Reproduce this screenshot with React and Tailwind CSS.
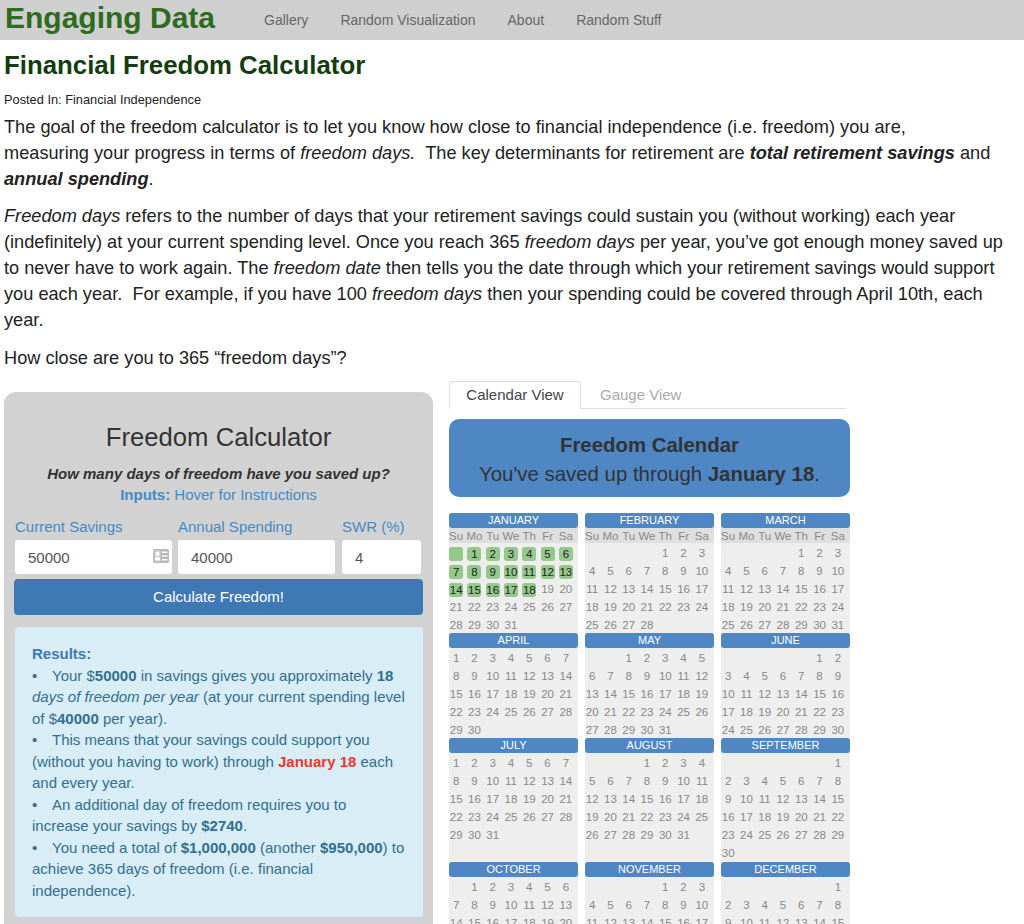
const months = [
  { name: 'JANUARY', start: 1, days: 31 },
  { name: 'FEBRUARY', start: 4, days: 28 },
  { name: 'MARCH', start: 4, days: 31 },
  { name: 'APRIL', start: 0, days: 30 },
  { name: 'MAY', start: 2, days: 31 },
  { name: 'JUNE', start: 5, days: 30 },
  { name: 'JULY', start: 0, days: 31 },
  { name: 'AUGUST', start: 3, days: 31 },
  { name: 'SEPTEMBER', start: 6, days: 30 },
  { name: 'OCTOBER', start: 1, days: 31 },
  { name: 'NOVEMBER', start: 4, days: 30 },
  { name: 'DECEMBER', start: 6, days: 31 },
];

const dayNames = ['Su', 'Mo', 'Tu', 'We', 'Th', 'Fr', 'Sa'];
const savedDays = 18;

const Month = ({ month, index }) => {
  const cells = [];
  for (let i = 0; i < month.start; i++) cells.push(null);
  for (let d = 1; d <= month.days; d++) cells.push(d);
  const showNames = index < 3;

  return (
    <div className="bg-[#eeeeee]">
      <div className="h-[15px] bg-[#4f87c4] rounded-[3px] text-white text-[11px] leading-[14px] text-center">
        {month.name}
      </div>
      {showNames ? (
        <div className="h-[15px] bg-[#dfdfdf]">
          <div className="grid grid-cols-7 -ml-[2px] w-[128px] text-[#888888] text-[11.5px] leading-[16px] text-center">
            {dayNames.map((n) => (
              <div key={n}>{n}</div>
            ))}
          </div>
        </div>
      ) : null}
      <div className={`grid grid-cols-7 -ml-[2px] w-[128px] pt-[2px] ${index < 6 ? '-mb-[2px]' : '-mb-px'}`}>
        {cells.map((d, i) => {
          const saved = index === 0 && i <= savedDays;
          return (
            <div key={i} className="h-[18px] flex items-center justify-center text-[11.5px]">
              {saved ? (
                <span className="w-[14px] h-[14px] rounded-[3px] bg-[#94c98b] text-[#222222] leading-[14px] text-center">
                  {d}
                </span>
              ) : (
                <span className="text-[#888888]">{d}</span>
              )}
            </div>
          );
        })}
      </div>
    </div>
  );
};

const CardIcon = () => (
  <svg className="absolute right-[3px] top-[9px]" width="16" height="14" viewBox="0 0 17 15">
    <rect x="0" y="0" width="17" height="15" rx="2" fill="#b5b5b5" />
    <rect x="1.5" y="1.5" width="6.5" height="12" fill="#d6d6d6" />
    <circle cx="4.8" cy="5" r="2" fill="#ffffff" />
    <path d="M2 12c0-2.5 1.2-3.5 2.8-3.5s2.8 1 2.8 3.5z" fill="#ffffff" />
    <path d="M9.5 3.5h6M9.5 7.5h6M9.5 11.5h6" stroke="#ffffff" strokeWidth="1.5" />
  </svg>
);

const Bullet = () => <span className="inline-block w-[20px]">•</span>;

const App = () => {
  return (
    <div className="h-screen overflow-hidden bg-white font-['Liberation_Sans',Arial,sans-serif] text-[#222222]">
      <nav className="h-10 bg-[#cfcfcf] flex items-center pl-[5px]">
        <a className="text-[30px] font-bold text-[#2e6b1f] leading-none -mt-1">Engaging Data</a>
        <div className="flex gap-8 ml-[49px] text-[14px] text-[#666666]">
          <a>Gallery</a>
          <a>Random Visualization</a>
          <a>About</a>
          <a>Random Stuff</a>
        </div>
      </nav>

      <main className="px-1">
        <h1 className="mt-[10px] text-[25.8px] leading-[30px] font-bold text-[#143d0f]">Financial Freedom Calculator</h1>
        <p className="mt-[12px] text-[12.8px] leading-[16px]">Posted In: Financial Independence</p>
        <p className="mt-[6px] text-[18.2px] leading-[26px]">
          The goal of the freedom calculator is to let you know how close to financial independence (i.e. freedom) you are,
          <br />
          measuring your progress in terms of <em>freedom days.</em>&nbsp; The key determinants for retirement are{' '}
          <strong>
            <em>total retirement savings</em>
          </strong>{' '}
          and{' '}
          <strong>
            <em>annual spending</em>
          </strong>
          .
        </p>
        <p className="mt-[11px] text-[18.2px] leading-[26px] w-[1016px]">
          <em>Freedom days</em> refers to the number of days that your retirement savings could sustain you (without working) each year
          (indefinitely) at your current spending level. Once you reach 365 <em>freedom days</em> per year, you’ve got enough money saved up
          to never have to work again. The <em>freedom date</em> then tells you the date through which your retirement savings would support
          you each year.&nbsp; For example, if you have 100 <em>freedom days</em> then your spending could be covered through April 10th, each
          year.
        </p>
        <p className="mt-[12px] text-[18.2px] leading-[26px]">How close are you to 365 “freedom days”?</p>

        <div className="flex mt-[10px] gap-4">
          <section className="mt-[11px] w-[429px] shrink-0 bg-[#d2d2d2] rounded-xl px-[10px] pb-6">
            <h2 className="pt-[30px] text-[25.7px] leading-[30px] text-center text-[#333333]">Freedom Calculator</h2>
            <p className="mt-[11px] text-[15px] leading-[21px] font-bold italic text-center text-[#333333]">
              How many days of freedom have you saved up?
            </p>
            <p className="text-[15px] leading-[21px] text-center text-[#428bca]">
              <strong>Inputs:</strong> Hover for Instructions
            </p>

            <div className="flex gap-[6px] mt-[12px] text-[15px] text-[#428bca]">
              <label className="w-[157px] ml-px">
                <span className="block leading-[20px] mb-[3px]">Current Savings</span>
                <span className="relative block">
                  <input defaultValue="50000" className="w-full h-[34px] bg-white rounded-[3px] px-[13px] text-[15px] text-[#555555]" />
                  <CardIcon />
                </span>
              </label>
              <label className="w-[157px]">
                <span className="block leading-[20px] mb-[3px]">Annual Spending</span>
                <input defaultValue="40000" className="w-full h-[34px] bg-white rounded-[3px] px-[13px] text-[15px] text-[#555555]" />
              </label>
              <label className="w-[79px] ml-px">
                <span className="block leading-[20px] mb-[3px]">SWR (%)</span>
                <input defaultValue="4" className="w-full h-[34px] bg-white rounded-[3px] px-[13px] text-[15px] text-[#555555]" />
              </label>
            </div>

            <button className="block w-full h-[36px] mt-[5px] bg-[#3f79b5] rounded-[4px] text-white text-[15px]">Calculate Freedom!</button>

            <div className="mt-[12px] ml-px bg-[#d9edf7] rounded-[4px] pl-[17px] pr-[16px] py-[16px] text-[15px] leading-[21.5px] text-[#31708f]">
              <strong className="text-[#3f79b5]">Results:</strong>
              <br />
              <Bullet />
              Your $<strong>50000</strong> in savings gives you approximately <strong>18</strong> <em>days of freedom per year</em> (at your current spending level of $<strong>40000</strong> per year).
              <br />
              <Bullet />
              This means that your savings could support you (without you having to work) through <strong className="text-[#e8392c]">January 18</strong> each and every year.
              <br />
              <Bullet />
              An additional day of freedom requires you to increase your savings by <strong>$2740</strong>.
              <br />
              <Bullet />
              You need a total of <strong>$1,000,000</strong> (another <strong>$950,000</strong>) to achieve 365 days of freedom (i.e. financial independence).
            </div>
          </section>

          <section className="w-[401px] shrink-0">
            <div className="flex w-[397px] h-[28px] border-b border-[#dddddd] text-[15px]">
              <div className="w-[132px] h-[28px] bg-white border border-b-0 border-[#dddddd] rounded-t-[4px] text-center leading-[26px] text-[#444444]">
                Calendar View
              </div>
              <div className="ml-[19px] leading-[27px] text-[#aaaaaa]">Gauge View</div>
            </div>

            <div className="mt-[10px] h-[78px] bg-[#4f87c4] rounded-[10px] text-center text-[20.4px] text-[#333333] pt-[12px] leading-[29px]">
              <strong>Freedom Calendar</strong>
              <br />
              You've saved up through <strong>January 18</strong>.
            </div>

            <div className="grid grid-cols-3 gap-x-[7px] mt-[16px]">
              {months.map((m, i) => (
                <Month key={m.name} month={m} index={i} />
              ))}
            </div>
          </section>
        </div>
      </main>
    </div>
  );
};

export default App;
